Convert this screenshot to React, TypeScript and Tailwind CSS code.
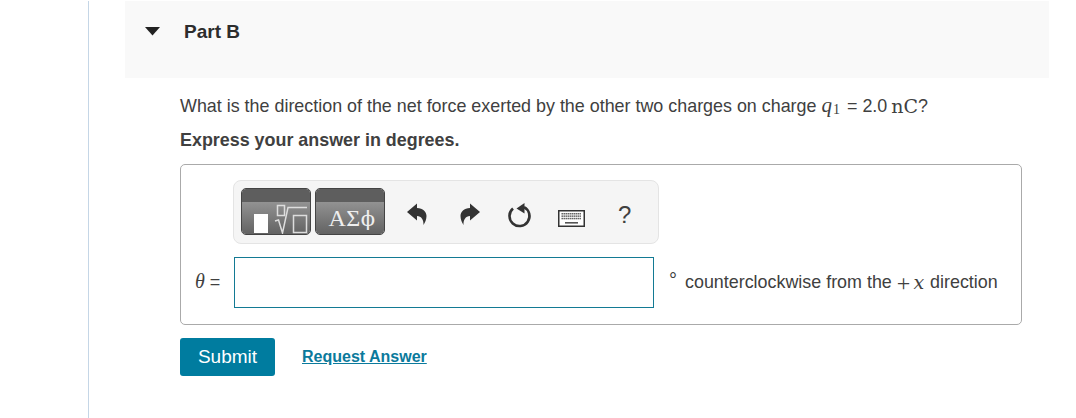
const sans = "font-['Liberation_Sans',Arial,sans-serif]";

function UndoIcon({ flip }: { flip?: boolean }) {
  return (
    <svg width="22" height="24" viewBox="0 0 22 24" className={flip ? '-scale-x-100' : ''}>
      <path d="M1 10 L11 1.5 V6 C17 6 20.5 10 20.5 14 C20.5 17.5 19 20.5 17.5 23 C17.8 18 15.5 14 11 14 V18.5 Z" fill="#333" />
    </svg>
  );
}

function ResetIcon() {
  return (
    <svg width="27" height="27" viewBox="0 0 27 27" fill="none">
      <path d="M18 5.1 A10 10 0 1 1 7 6.4" stroke="#333" strokeWidth="2.6" />
      <path d="M10.5 6.5 L18.5 1 V11.5 Z" fill="#333" />
    </svg>
  );
}

function KeyboardIcon() {
  const keys = [];
  for (let y = 0; y < 3; y++) {
    for (let x = 0; x < 10; x++) {
      keys.push(<rect key={`${x}-${y}`} x={3.5 + x * 2} y={3 + y * 2.4} width="1.4" height="1.5" fill="#555" />);
    }
  }
  return (
    <svg width="27" height="17" viewBox="0 0 27 17">
      <rect x="0.75" y="0.75" width="25.5" height="15.5" fill="#fff" stroke="#333" strokeWidth="1.5" />
      {keys}
      <rect x="7" y="12" width="13" height="1.6" fill="#555" />
    </svg>
  );
}

function TemplateIcon() {
  return (
    <svg width="68" height="32" viewBox="0 0 68 32" fill="none">
      <rect x="12" y="12" width="14" height="19" fill="#fff" />
      <rect x="35.5" y="3.5" width="7" height="10" stroke="#ddd" strokeWidth="1.5" />
      <path d="M33 19 L36.5 18 L40.5 31 L46 5.5 H65" stroke="#ddd" strokeWidth="1.5" />
      <rect x="51.5" y="13.5" width="13" height="17" stroke="#ddd" strokeWidth="1.5" />
    </svg>
  );
}

function ToolButton({ children, width }: { children: React.ReactNode; width: string }) {
  return (
    <div className={`${width} flex h-[47px] flex-col overflow-hidden rounded-[5px] border border-[#444]`}>
      <div className="h-[13px] bg-[#5e5e5e]" />
      <div className="flex flex-1 items-end justify-center bg-gradient-to-b from-[#929292] to-[#636363]">{children}</div>
    </div>
  );
}

export default function App() {
  return (
    <div className={`${sans} h-[418px] w-[1076px] overflow-hidden bg-white pl-[88px] pt-px text-[17.9px] text-[#404040]`}>
      <div className="h-full border-l border-[#c5d6e6] pl-9 pr-[27px]">
        <div className="flex h-[77px] w-[924px] items-start bg-[#f9f9f9] pl-5 pt-[20px]">
          <svg width="15" height="9" viewBox="0 0 15 9" className="mt-[6px]">
            <path d="M0 0 H15 L7.5 8.5 Z" fill="#222" />
          </svg>
          <span className="ml-[24px] text-[19px] leading-[22px] font-bold text-[#2d2d2d]">Part B</span>
        </div>

        <div className="w-[897px] pl-[55px]">
          <p className="mt-[16px] flex h-[24px] items-center whitespace-pre">
            What is the direction of the net force exerted by the other two charges on charge
            <span className="ml-[5px] font-['Liberation_Serif',serif] text-[21px] italic">q</span>
            <span className="mt-[6px] ml-px font-['Liberation_Serif',serif] text-[14px]">1</span>
            <span className="ml-[7px]">= 2.0</span>
            <span className="ml-[4px] font-['DejaVu_Serif',serif] text-[19px]">nC</span>?
          </p>
          <p className="mt-[10px] leading-[24px] font-bold">Express your answer in degrees.</p>

          <div className="mt-[12px] h-[161px] w-[842px] rounded-[5px] border border-[#aaa] pl-[52px] pt-[15px]">
            <div className="flex h-[64px] w-[426px] items-start rounded-lg border border-[#e4e4e4] bg-[#f5f5f5] pl-[7px]">
              <div className="mt-[7px]">
                <ToolButton width="w-[70px]">
                  <TemplateIcon />
                </ToolButton>
              </div>
              <div className="mt-[7px] ml-[4px]">
                <ToolButton width="w-[70px]">
                  <span className="pl-[4px] font-['Liberation_Serif',serif] text-[24px] leading-[30px] tracking-[0.5px] text-[#eee]">
                    ΑΣ<span className="font-['DejaVu_Serif',serif] text-[21px]">ϕ</span>
                  </span>
                </ToolButton>
              </div>
              <div className="ml-[21px] flex items-start">
                <div className="mt-[21px]"><UndoIcon /></div>
                <div className="mt-[21px] ml-[31px]"><UndoIcon flip /></div>
                <div className="mt-[21px] ml-[25px]"><ResetIcon /></div>
                <div className="mt-[29px] ml-[25px]"><KeyboardIcon /></div>
                <span className="mt-[22px] ml-[33px] text-[24px] leading-none">?</span>
              </div>
            </div>

            <div className="mt-[13px] flex items-center">
              <span className="-mt-[3px] -ml-[38px] w-[39px] whitespace-pre text-[18px]">
                <span className="font-['Liberation_Serif',serif] text-[20px] italic">θ</span> =
              </span>
              <div className="h-[51px] w-[420px] border border-[#137a94] bg-white" />
              <span className="ml-[15px] -mt-[5px] text-[20px] leading-none">°</span>
              <span className="ml-[8px] flex items-center whitespace-pre">
                counterclockwise from the
                <span className="ml-[5px] font-['Liberation_Serif',serif] text-[24px] leading-none">+</span>
                <span className="ml-[3px] font-['DejaVu_Serif',serif] text-[19px] italic">x</span>
                <span className="ml-[6px]">direction</span>
              </span>
            </div>
          </div>

          <div className="mt-[13px] flex items-center">
            <button className="h-[38px] w-[95px] rounded-[3px] bg-[#007c9f] text-[19px] text-white">Submit</button>
            <a className="ml-[27px] text-[16px] font-bold text-[#0b7a9c] underline">Request Answer</a>
          </div>
        </div>
      </div>
    </div>
  );
}
